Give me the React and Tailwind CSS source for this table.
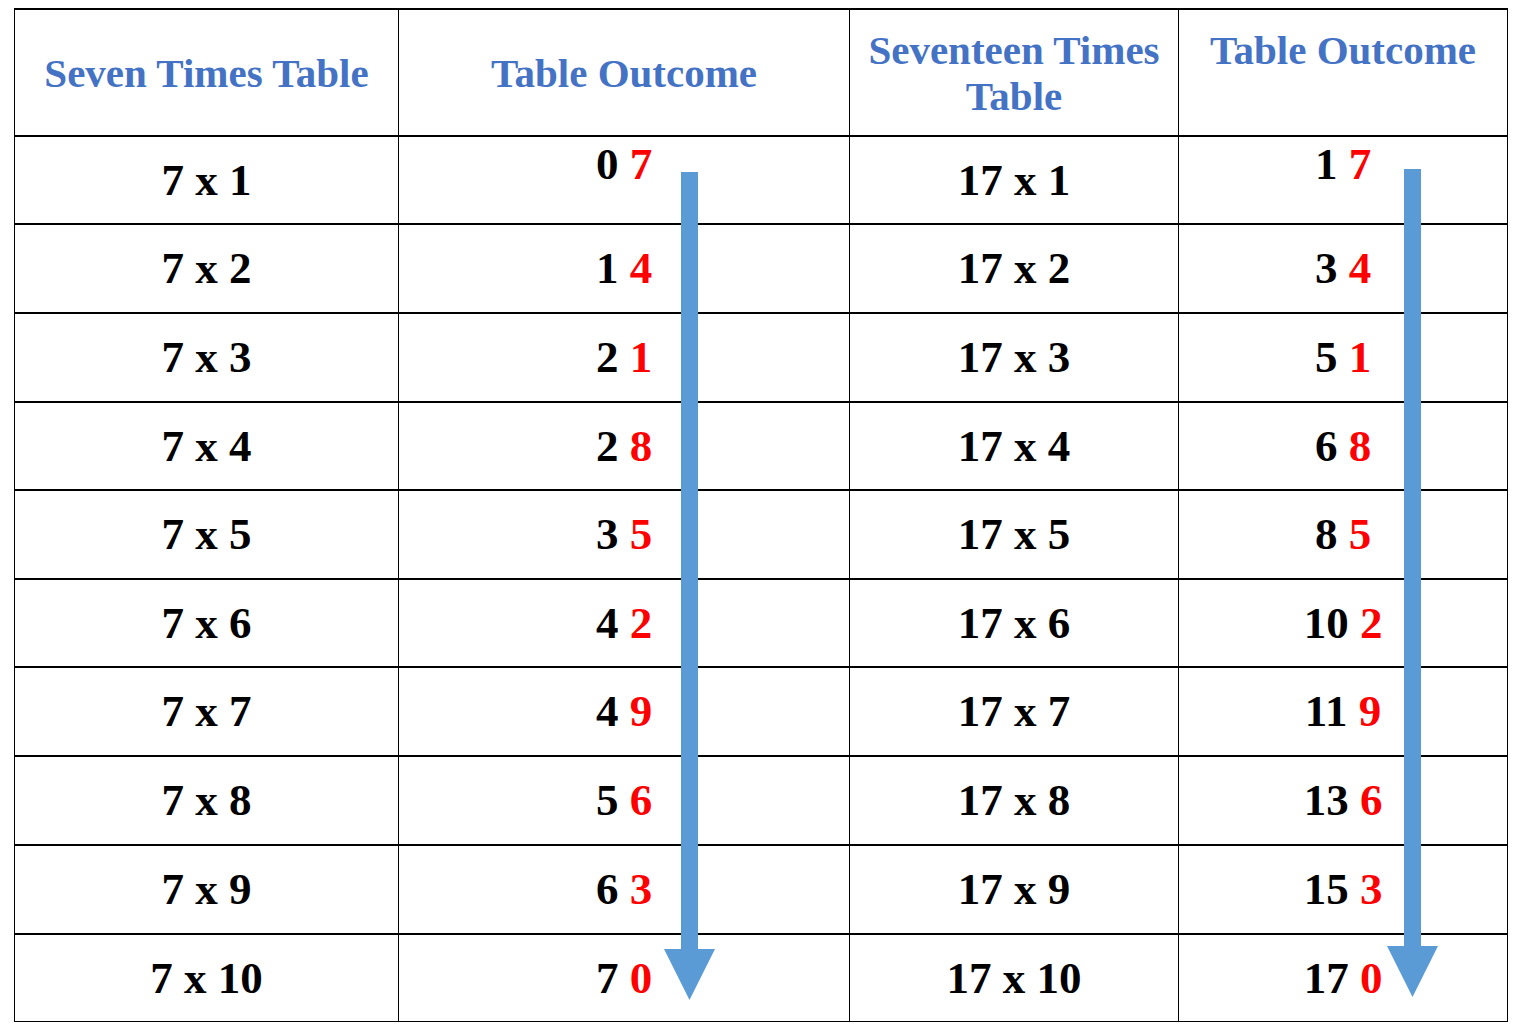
const rows = [
  { n: 1, a: "0", b: "7", c: "1", d: "7" },
  { n: 2, a: "1", b: "4", c: "3", d: "4" },
  { n: 3, a: "2", b: "1", c: "5", d: "1" },
  { n: 4, a: "2", b: "8", c: "6", d: "8" },
  { n: 5, a: "3", b: "5", c: "8", d: "5" },
  { n: 6, a: "4", b: "2", c: "10", d: "2" },
  { n: 7, a: "4", b: "9", c: "11", d: "9" },
  { n: 8, a: "5", b: "6", c: "13", d: "6" },
  { n: 9, a: "6", b: "3", c: "15", d: "3" },
  { n: 10, a: "7", b: "0", c: "17", d: "0" },
];

// row heights follow the ruled lines of the original sheet
const rowHeights = [
  "h-[88px] border-b-2",
  "h-[89px] border-b-2",
  "h-[89px] border-b-2",
  "h-[88px] border-b-2",
  "h-[89px] border-b-2",
  "h-[88px] border-b-2",
  "h-[89px] border-b-2",
  "h-[89px] border-b-2",
  "h-[89px] border-b-2",
  "h-[87px] border-b",
];

const grid = "grid grid-cols-[384px_451px_329px_329px]";

function Arrow({ className }) {
  return (
    <svg className={className} width="51" height="828" viewBox="0 0 51 828">
      <rect x="17" y="0" width="17" height="778" fill="#5B9BD5" />
      <polygon points="0,777 51,777 25.5,828" fill="#5B9BD5" />
    </svg>
  );
}

function Outcome({ tens, ones, first }) {
  return (
    <div
      className={`flex justify-center items-center border-r border-black ${
        first ? "pb-[32px]" : ""
      }`}
    >
      <span className="text-black">{tens} </span>
      <span className="text-[#FF0000]">&nbsp;{ones}</span>
    </div>
  );
}

export default function App() {
  return (
    <div
      className="relative w-[1517px] h-[1036px] bg-white pt-[8px] pl-[14px] font-bold"
      style={{ fontFamily: '"Liberation Serif", "Times New Roman", serif' }}
    >
      <div className="w-[1494px] border-l border-black">
        {/* Header */}
        <div className={`${grid} h-[129px] border-t-2 border-b-2 border-black text-[41px] leading-[46px] text-[#4472C4]`}>
          <div className="flex items-center justify-center border-r border-black">
            Seven Times Table
          </div>
          <div className="flex items-center justify-center border-r border-black">
            Table Outcome
          </div>
          <div className="flex items-center justify-center text-center border-r border-black">
            Seventeen Times
            <br />
            Table
          </div>
          <div className="flex justify-center pt-[17px] border-r border-black">
            Table Outcome
          </div>
        </div>

        {/* Body */}
        {rows.map((r, i) => (
          <div
            key={r.n}
            className={`${grid} ${rowHeights[i]} border-black text-[45px] leading-none text-black`}
          >
            <div className="flex items-center justify-center border-r border-black whitespace-pre">
              {`7 x ${r.n}`}
            </div>
            <Outcome tens={r.a} ones={r.b} first={i === 0} />
            <div className="flex items-center justify-center border-r border-black whitespace-pre">
              {`17 x ${r.n}`}
            </div>
            <Outcome tens={r.c} ones={r.d} first={i === 0} />
          </div>
        ))}
      </div>

      {/* Downward arrows over the outcome columns */}
      <Arrow className="absolute left-[664px] top-[172px]" />
      <Arrow className="absolute left-[1387px] top-[169px]" />
    </div>
  );
}
